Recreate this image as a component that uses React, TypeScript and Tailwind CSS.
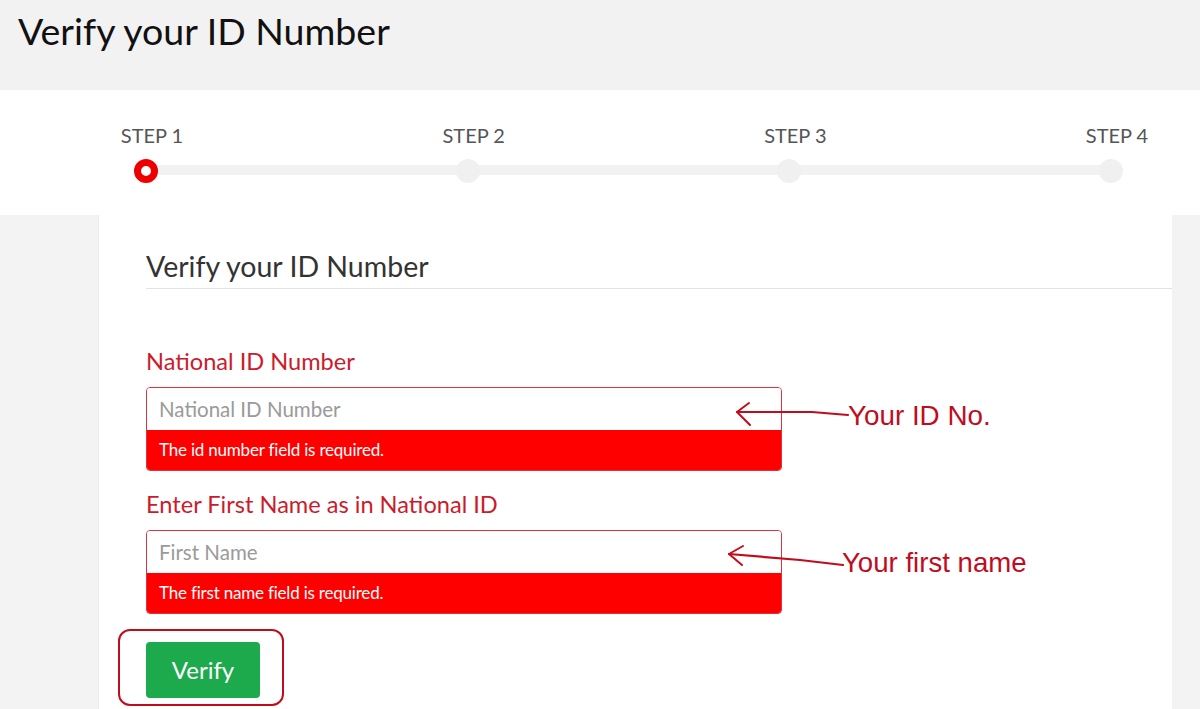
import React from "react";

const steps = ["STEP 1", "STEP 2", "STEP 3", "STEP 4"];

function Field({ label, placeholder, error }: { label: string; placeholder: string; error: string }) {
  return (
    <div className="flex flex-col">
      <label className="text-[23.6px] leading-[26px] text-[#cc1b2b]">{label}</label>
      <div className="mt-[13px] w-[636px] rounded-[4px] overflow-hidden border border-[#e0323c]">
        <div className="h-[42px] bg-white flex items-center px-[12px] text-[20.5px] text-[#9a9a9a]">{placeholder}</div>
        <div className="h-[40px] bg-[#ff0000] flex items-center px-[12px] text-[17px] text-white tracking-[-0.2px]">{error}</div>
      </div>
    </div>
  );
}

export default function App() {
  return (
    <div className="w-[1200px] h-[709px] overflow-hidden relative bg-[#f3f3f3] font-['Lato','Noto_Sans',sans-serif]">
      <div className="h-[90px] bg-[#f2f2f2] flex items-center px-[18px]">
        <h1 className="text-[37.5px] leading-none text-[#111] -mt-[28px]">Verify your ID Number</h1>
      </div>

      <div className="h-[125px] bg-white pt-[34px]">
        <div className="relative ml-[134px] w-[989px]">
          <div className="flex justify-between">
            {steps.map((s) => (
              <div key={s} className="w-[24px] flex justify-center">
                <span className="whitespace-nowrap text-[20px] leading-[22px] text-[#555] pl-[12px]">{s}</span>
              </div>
            ))}
          </div>
          <div className="relative mt-[13px] h-[24px]">
            <div className="absolute left-[12px] right-[12px] top-[6px] h-[10px] bg-[#f2f2f2]" />
            <div className="relative flex justify-between">
              <div className="w-[24px] h-[24px] rounded-full border-[7px] border-[#ee0000] bg-white" />
              <div className="w-[24px] h-[24px] rounded-full bg-[#f0f0f0]" />
              <div className="w-[24px] h-[24px] rounded-full bg-[#f0f0f0]" />
              <div className="w-[24px] h-[24px] rounded-full bg-[#f0f0f0]" />
            </div>
          </div>
        </div>
      </div>

      <div className="flex pl-[98px] pr-[28px]">
        <div className="flex-1 bg-white h-[494px] pl-[47px] border-l border-[#ececec]">
          <h2 className="mt-[35px] text-[28.5px] leading-[32px] text-[#333] pb-[6px] border-b border-[#e3e3e3]">
            Verify your ID Number
          </h2>
          <div className="mt-[59px] flex flex-col gap-[20px]">
            <Field label="National ID Number" placeholder="National ID Number" error="The id number field is required." />
            <Field label="Enter First Name as in National ID" placeholder="First Name" error="The first name field is required." />
          </div>
          <div className="mt-[28px] relative w-[114px]">
            <button className="w-[114px] h-[56px] rounded-[4px] bg-[#1caa4c] text-white text-[24px]">Verify</button>
            <div className="absolute -left-[28px] -top-[13px] w-[166px] h-[77px] border-2 border-[#c00d1e] rounded-[12px]" />
          </div>
        </div>
      </div>

      <svg className="absolute left-0 top-0" width="1200" height="709" fill="none">
        <path d="M737 412 L812 412 L848 415" stroke="#c00d1e" strokeWidth="2.2" strokeLinecap="round" strokeLinejoin="round" />
        <path d="M749 403 L737 412 L750 425" stroke="#c00d1e" strokeWidth="2" strokeLinecap="round" strokeLinejoin="round" />
        <path d="M729 554 L800 560 L843 565" stroke="#c00d1e" strokeWidth="2.2" strokeLinecap="round" strokeLinejoin="round" />
        <path d="M743 546 L729 554 L742 565" stroke="#c00d1e" strokeWidth="2" strokeLinecap="round" strokeLinejoin="round" />
      </svg>
      <span className="absolute left-[848px] top-[400px] text-[27.8px] leading-[32px] text-[#c00d1e] font-['Liberation_Sans',Arial,sans-serif]">
        Your ID No.
      </span>
      <span className="absolute left-[842px] top-[547px] text-[27.6px] leading-[32px] text-[#c00d1e] font-['Liberation_Sans',Arial,sans-serif]">
        Your first name
      </span>
    </div>
  );
}
